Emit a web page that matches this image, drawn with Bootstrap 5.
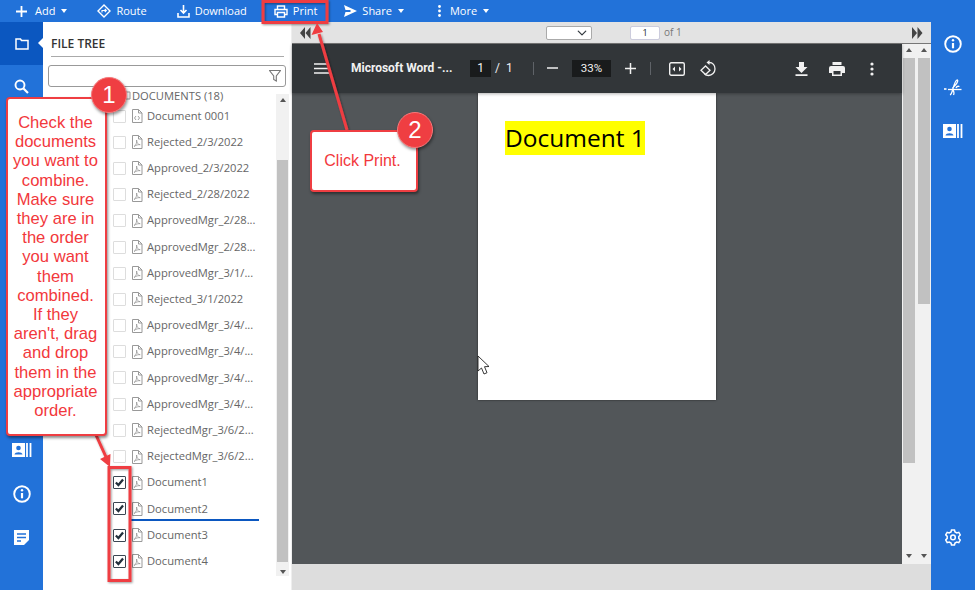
<!DOCTYPE html>
<html lang="en"><head><meta charset="utf-8"><title>File tree</title>
<link href="https://cdn.jsdelivr.net/npm/bootstrap@5.3.0/dist/css/bootstrap.min.css" rel="stylesheet">
<style>
html,body{height:590px;overflow:hidden}
body{font-family:"Open Sans","Liberation Sans",sans-serif;background:#2272d9;position:relative;width:975px}
.appbar{height:22px;background:#2272d9;color:#fff;font-size:11px;padding-left:16px;gap:28px;line-height:22px}
.appbar svg{display:block;margin-right:5px}
.tb-add svg{margin-right:8px}
.tb-route{margin-left:2px}
.tb-down{margin-left:2px}
.tb-print{margin-left:-1px}
.tb-share{margin-left:-1px}
.tb-more{margin-left:6px}
.tb-more svg{margin-right:9px}
.tb-caret{width:0;height:0;border:3.5px solid transparent;border-top:4px solid #fff;border-bottom:0;margin-left:6px}
.main-row{height:568px}
.rail{width:43px;background:#2272d9;padding-bottom:31px}
.rail-r{width:44px}
.rail-btn{height:43.5px;display:flex;align-items:center;justify-content:center;position:relative}
.rail-on{background:#0b57c0;height:43px}
.rail-on::after{content:"";position:absolute;right:-1px;top:15px;border:6px solid transparent;border-right-color:#fff;border-left:0}
.tree-panel{width:248px;background:#fff;color:#555}
.tree-title{font-size:12px;font-weight:600;color:#333;margin:14px 7px 0 8px;height:21px;line-height:16px;border-bottom:1px solid #aaa}
.tree-search{margin:8px 5px 0;height:22px;width:238px;position:relative}
.tree-search .form-control{height:22px;min-height:22px;padding:0 20px 0 4px;border:1px solid #999;border-radius:3px;font-size:11px}
.tree-funnel{position:absolute;right:5px;top:5px}
.tree-body{height:486px;margin-top:3px;padding-right:2px}
.tree-list{flex:1;font-size:11.2px;color:#666;padding-left:70px}
.tree-head{height:13px;line-height:11px;padding-left:10px;white-space:nowrap;display:flex;align-items:flex-start}
.tree-head svg{margin:1px 1px 0 0;flex:none}
.tree-row{height:26.2px;display:flex;align-items:center;white-space:nowrap;position:relative}
.tree-row .form-check-input{width:13px;height:13px;margin:0 5px 0 0;border:1px solid #ddd;border-radius:1px;flex:none}
.form-check-input:checked[type=checkbox]{background-color:#fff;border:1.5px solid #3a4652;--bs-form-check-bg-image:url("data:image/svg+xml,%3Csvg xmlns='http://www.w3.org/2000/svg' viewBox='0 0 13 13'%3E%3Cpath d='M2.2 6.5l3 3 5.500-6.500' fill='none' stroke='%2322303c' stroke-width='2.700'/%3E%3C/svg%3E");background-size:100%}
.tree-ico{flex:none;margin-right:4px}
.tree-drop{position:absolute;left:18px;width:128px;bottom:1px;height:2px;background:#0b57c0}
.vbar{width:13px;background:#f1f1f1;height:482px;margin-top:4px}
.vbar-thumb{background:#c1c1c1}
.vbar .vbar-thumb{width:11px;margin-left:1px}
.tri-up,.tri-dn{width:0;height:0;border:3.5px solid transparent;margin:0 auto}
.tri-up{border-bottom:4px solid #555;border-top:0}
.tri-dn{border-top:4px solid #555;border-bottom:0}
.viewer{width:640px;background:#ddd;border-left:1px solid #eee}
.viewer-top{height:21px;background:#e3e3e3;font-size:10px;color:#777;position:relative}
.viewer-top .form-select{width:46px;height:14px;min-height:14px;padding:0;background-position:right 4px center;background-size:10px;border:1px solid #aaa;border-radius:2px;margin-left:235px}
.viewer-top .form-control{width:30px;height:14px;min-height:14px;padding:0;font-size:9px;text-align:center;border:1px solid #ccd;border-radius:2px;margin:0 4px 0 38px}
.pdf-wrap{height:521px;border-top:1px solid #777}
.pdf-col{width:610px;background:#525659}
.pdf-bar{height:49px;background:#323639;color:#f1f1f1;font-family:Roboto,"Liberation Sans",sans-serif;font-size:12px;box-shadow:0 1px 3px rgba(0,0,0,.3);position:relative}
.pdf-bar>*{position:absolute}
.pdf-box{background:#191b1c;text-align:center;height:17px;line-height:17px;top:16px}
.pdf-sep{width:1px;height:13px;background:#5f6368;top:18px}
.pdf-page{width:238px;height:307px;background:#fff;margin:0 auto;padding-top:28px;padding-left:27px;box-shadow:0 0 2px rgba(0,0,0,.6)}
.pdf-hl{background:#ff0;color:#000;font-size:24.5px;line-height:34px;display:inline-block;font-family:"Open Sans",sans-serif}
.vbars{width:29px;background:#f1f1f1;padding:0 0 0 1px;gap:3px}
.vbars>div{width:12px}
.viewer-foot{height:26px;background:#ddd}
.annot{position:absolute;background:#fff;border:2px solid #ef3e42;border-radius:4px;color:#f2383c;font-family:"Liberation Sans",Arial,sans-serif;box-shadow:1px 2px 3px rgba(0,0,0,.45);text-align:center}
.annot-a{left:6px;top:97px;width:101px;height:339px;font-size:16.6px;line-height:19.2px;padding-top:14px;padding-right:2px}
.annot-b{left:310px;top:130px;width:108px;height:62px;font-size:16px;line-height:58px;padding-right:3px}
.annot-num{position:absolute;background:#ef3e42;color:#fff;border-radius:50%;border:1px solid #f7797b;font-family:"Liberation Sans",Arial,sans-serif;font-size:24px;text-align:center;box-shadow:1px 2px 3px rgba(0,0,0,.4)}
.num-a{left:91px;top:77px;width:36px;height:36px;line-height:34px}
.num-b{left:397px;top:112px;width:36px;height:36px;line-height:34px}
.annot-svg{position:absolute;left:0;top:0;pointer-events:none}
</style></head>
<body>
<svg width="0" height="0" class="position-absolute">
<symbol id="pdfi" viewBox="0 0 12 14"><path d="M1.500.5h6l3.500 3.500v9.500h-9.500z M7.500.5V4H11" fill="none" stroke="#999"/><path d="M3 11.500c2-1 3-4 2.600-6.500 0 3 1.500 4.500 3.600 4.700-2-.2-4.200.3-6.200 1.800z" fill="none" stroke="#999" stroke-width=".8"/></symbol>
<symbol id="cardi" viewBox="0 0 20 16"><path d="M0 1h13v14H0z" fill="#fff"/><circle cx="6.500" cy="6" r="2.300" fill="#2272d9"/><path d="M2.500 12.500c.5-3 7.500-3 8 0z" fill="#2272d9"/><path d="M15 1v14M18.500 1v14" stroke="#fff" stroke-width="1.800"/></symbol>
<symbol id="infoi" viewBox="0 0 18 18"><circle cx="9" cy="9" r="7.800" fill="none" stroke="#fff" stroke-width="1.900"/><circle cx="9" cy="5.300" r="1.200" fill="#fff"/><path d="M9 8v5.300" stroke="#fff" stroke-width="2.200"/></symbol>
</svg>

<nav class="appbar d-flex align-items-center">
<div class="tb-add d-flex align-items-center"><svg width="11" height="11" viewBox="0 0 11 11"><path d="M5.500 0v11M0 5.500h11" stroke="#fff" stroke-width="1.800"/></svg>Add<span class="tb-caret"></span></div>
<div class="tb-route d-flex align-items-center"><svg width="14" height="14" viewBox="0 0 14 14"><path d="M7 1l6 6-6 6-6-6z" fill="none" stroke="#fff" stroke-width="1.400"/><path d="M5 8.500V6.500h4M7.800 5l1.500 1.500-1.500 1.500" fill="none" stroke="#fff" stroke-width="1.100"/></svg>Route</div>
<div class="tb-down d-flex align-items-center"><svg width="13" height="13" viewBox="0 0 13 13"><path d="M6.500 0v7.500M3.500 5l3 3 3-3" fill="none" stroke="#fff" stroke-width="1.600"/><path d="M1 8v4h11V8" fill="none" stroke="#fff" stroke-width="1.600"/></svg>Download</div>
<div class="tb-print d-flex align-items-center"><svg width="14" height="13" viewBox="0 0 14 13"><path d="M3.500 4V1h7v3M3.500 9.500H1V4.500h12v5h-2.500M3.500 7.500h7V12h-7z" fill="none" stroke="#fff" stroke-width="1.400"/></svg>Print</div>
<div class="tb-share d-flex align-items-center"><svg width="13" height="12" viewBox="0 0 13 12"><path d="M0 0l13 6-13 6 1.500-5h5v-2h-5z" fill="#fff"/></svg>Share<span class="tb-caret"></span></div>
<div class="tb-more d-flex align-items-center"><svg width="3" height="12" viewBox="0 0 3 12"><circle cx="1.500" cy="1.500" r="1.400" fill="#fff"/><circle cx="1.500" cy="6" r="1.400" fill="#fff"/><circle cx="1.500" cy="10.500" r="1.400" fill="#fff"/></svg>More<span class="tb-caret"></span></div>
</nav>

<div class="main-row d-flex">
<aside class="rail d-flex flex-column justify-content-between">
<div>
<div class="rail-btn rail-on"><svg width="14" height="12" viewBox="0 0 14 12"><path d="M1 1h4.500l1 1.500H13V11H1z" fill="none" stroke="#fff" stroke-width="1.500"/></svg></div>
<div class="rail-btn"><svg width="15" height="15" viewBox="0 0 15 15"><circle cx="6" cy="6" r="4.500" fill="none" stroke="#fff" stroke-width="1.900"/><path d="M9.500 9.500l4.500 4.500" stroke="#fff" stroke-width="2.200"/></svg></div>
</div>
<div>
<div class="rail-btn"><svg width="20" height="16"><use href="#cardi"/></svg></div>
<div class="rail-btn"><svg width="18" height="18"><use href="#infoi"/></svg></div>
<div class="rail-btn"><svg width="15" height="15" viewBox="0 0 15 15"><path d="M0 0h15v10l-5 5H0z" fill="#fff"/><path d="M3 4h9M3 7.500h9M3 11h4" stroke="#2272d9" stroke-width="1.400"/></svg></div>
</div>
</aside>

<section class="tree-panel">
<div class="tree-title">FILE TREE</div>
<div class="tree-search"><input class="form-control" type="text" aria-label="Filter"><svg class="tree-funnel" width="12" height="12" viewBox="0 0 12 12"><path d="M.5.500h11L7.300 6v5L4.700 9.500V6z" fill="#fff" stroke="#777" stroke-width="1.100"/></svg></div>
<div class="tree-body d-flex">
<div class="tree-list">
<div class="tree-head"><svg width="8" height="9" viewBox="0 0 8 9"><path d="M1 1h6v7H1z" fill="none" stroke="#999"/></svg>DOCUMENTS (18)</div>
<div class="tree-row"><input class="form-check-input" type="checkbox"><svg class="tree-ico" width="12" height="14" viewBox="0 0 12 14"><path d="M1.500.5h6l3.500 3.500v9.500h-9.500z M7.500.5V4H11" fill="none" stroke="#999"/><path d="M5 7L3.500 9 5 11M7 7l1.500 2L7 11" fill="none" stroke="#888" stroke-width=".8"/></svg>Document 0001</div>
<div class="tree-row"><input class="form-check-input" type="checkbox"><svg class="tree-ico" width="12" height="14"><use href="#pdfi"/></svg>Rejected_2/3/2022</div>
<div class="tree-row"><input class="form-check-input" type="checkbox"><svg class="tree-ico" width="12" height="14"><use href="#pdfi"/></svg>Approved_2/3/2022</div>
<div class="tree-row"><input class="form-check-input" type="checkbox"><svg class="tree-ico" width="12" height="14"><use href="#pdfi"/></svg>Rejected_2/28/2022</div>
<div class="tree-row"><input class="form-check-input" type="checkbox"><svg class="tree-ico" width="12" height="14"><use href="#pdfi"/></svg>ApprovedMgr_2/28...</div>
<div class="tree-row"><input class="form-check-input" type="checkbox"><svg class="tree-ico" width="12" height="14"><use href="#pdfi"/></svg>ApprovedMgr_2/28...</div>
<div class="tree-row"><input class="form-check-input" type="checkbox"><svg class="tree-ico" width="12" height="14"><use href="#pdfi"/></svg>ApprovedMgr_3/1/...</div>
<div class="tree-row"><input class="form-check-input" type="checkbox"><svg class="tree-ico" width="12" height="14"><use href="#pdfi"/></svg>Rejected_3/1/2022</div>
<div class="tree-row"><input class="form-check-input" type="checkbox"><svg class="tree-ico" width="12" height="14"><use href="#pdfi"/></svg>ApprovedMgr_3/4/...</div>
<div class="tree-row"><input class="form-check-input" type="checkbox"><svg class="tree-ico" width="12" height="14"><use href="#pdfi"/></svg>ApprovedMgr_3/4/...</div>
<div class="tree-row"><input class="form-check-input" type="checkbox"><svg class="tree-ico" width="12" height="14"><use href="#pdfi"/></svg>ApprovedMgr_3/4/...</div>
<div class="tree-row"><input class="form-check-input" type="checkbox"><svg class="tree-ico" width="12" height="14"><use href="#pdfi"/></svg>ApprovedMgr_3/4/...</div>
<div class="tree-row"><input class="form-check-input" type="checkbox"><svg class="tree-ico" width="12" height="14"><use href="#pdfi"/></svg>RejectedMgr_3/6/2...</div>
<div class="tree-row"><input class="form-check-input" type="checkbox"><svg class="tree-ico" width="12" height="14"><use href="#pdfi"/></svg>RejectedMgr_3/6/2...</div>
<div class="tree-row"><input class="form-check-input" type="checkbox" checked><svg class="tree-ico" width="12" height="14"><use href="#pdfi"/></svg>Document1</div>
<div class="tree-row"><input class="form-check-input" type="checkbox" checked><svg class="tree-ico" width="12" height="14"><use href="#pdfi"/></svg>Document2<span class="tree-drop"></span></div>
<div class="tree-row"><input class="form-check-input" type="checkbox" checked><svg class="tree-ico" width="12" height="14"><use href="#pdfi"/></svg>Document3</div>
<div class="tree-row"><input class="form-check-input" type="checkbox" checked><svg class="tree-ico" width="12" height="14"><use href="#pdfi"/></svg>Document4</div>
</div>
<div class="vbar d-flex flex-column"><div class="tri-up mt-1"></div><div style="height:58px"></div><div class="vbar-thumb" style="height:402px"></div><div class="tri-dn mt-2"></div></div>
</div>
</section>

<section class="viewer d-flex flex-column">
<div class="viewer-top d-flex align-items-center">
<svg class="ms-2" width="11" height="12" viewBox="0 0 11 12"><path d="M5 0v12L0 6zM10.500 0v12l-5-6z" fill="#444"/></svg>
<select class="form-select" aria-label="Scale"><option></option></select>
<input class="form-control" type="text" value="1" aria-label="Page"><span>of 1</span>
<svg class="ms-auto me-2" width="11" height="12" viewBox="0 0 11 12"><path d="M0 0v12l5-6zM5.500 0v12l5-6z" fill="#444"/></svg>
</div>
<div class="pdf-wrap d-flex">
<div class="pdf-col">
<div class="pdf-bar">
<svg style="left:22px;top:19px" width="15" height="11" viewBox="0 0 15 11"><path d="M0 1h15M0 5.500h15M0 10h15" stroke="#f1f1f1" stroke-width="1.500"/></svg>
<b style="left:59px;top:16px;line-height:17px">Microsoft Word -...</b>
<span class="pdf-box" style="left:178px;width:21px">1</span>
<span style="left:203px;top:16px;line-height:17px">/</span>
<span style="left:214px;top:16px;line-height:17px">1</span>
<span class="pdf-sep" style="left:241px"></span>
<svg style="left:255px;top:23px" width="11" height="2"><path d="M0 1h11" stroke="#f1f1f1" stroke-width="1.500"/></svg>
<span class="pdf-box" style="left:280px;width:39px;font-size:11.500px">33%</span>
<svg style="left:333px;top:19px" width="11" height="11" viewBox="0 0 11 11"><path d="M5.500 0v11M0 5.500h11" stroke="#f1f1f1" stroke-width="1.500"/></svg>
<span class="pdf-sep" style="left:358px"></span>
<svg style="left:377px;top:18px" width="16" height="14" viewBox="0 0 16 14"><rect x=".7" y=".7" width="14.600" height="12.600" rx="1.500" fill="none" stroke="#f1f1f1" stroke-width="1.400"/><path d="M6 4.500L3.500 7 6 9.500zM10 4.500L12.500 7 10 9.500z" fill="#f1f1f1"/></svg>
<svg style="left:408px;top:16px" width="16" height="17" viewBox="0 0 16 17"><path d="M9 2.500c4 0 6 3 6 6.500s-3 6.500-6.500 6.500c-2 0-3-.7-4-1.500" fill="none" stroke="#f1f1f1" stroke-width="1.300"/><path d="M9.500 0v5L6.500 2.500z" fill="#f1f1f1"/><path d="M5.500 6L1 10.200l4.500 4.300 4.500-4.300z" fill="none" stroke="#f1f1f1" stroke-width="1.300"/></svg>
<svg style="left:503px;top:18px" width="13" height="14" viewBox="0 0 13 14"><path d="M4 0h5v5h3.500l-6 6-6-6H4zM.5 12.300h12V14H.5z" fill="#f1f1f1"/></svg>
<svg style="left:537px;top:18px" width="16" height="14" viewBox="0 0 16 14"><path d="M3.500 0h9v3h-9zM2 4h12a2 2 0 0 1 2 2v5h-3v3H3v-3H0V6a2 2 0 0 1 2-2zM4.500 9v3.500h7V9z" fill="#f1f1f1" fill-rule="evenodd"/></svg>
<svg style="left:578px;top:18px" width="4" height="14" viewBox="0 0 4 14"><circle cx="2" cy="2" r="1.600" fill="#f1f1f1"/><circle cx="2" cy="7" r="1.600" fill="#f1f1f1"/><circle cx="2" cy="12" r="1.600" fill="#f1f1f1"/></svg>
</div>
<div class="pdf-page"><span class="pdf-hl">Document 1</span></div>
</div>
<div class="vbars d-flex">
<div class="d-flex flex-column"><div class="tri-up mt-1"></div><div class="vbar-thumb" style="height:405px;margin-top:6px"></div><div class="tri-dn" style="margin-top:auto;margin-bottom:6px"></div></div>
<div class="d-flex flex-column"><div class="tri-up mt-1"></div><div class="vbar-thumb" style="height:246px;margin-top:6px"></div><div class="tri-dn" style="margin-top:auto;margin-bottom:6px"></div></div>
</div>
</div>
<div class="viewer-foot"></div>
</section>

<aside class="rail rail-r d-flex flex-column justify-content-between">
<div>
<div class="rail-btn"><svg width="18" height="18"><use href="#infoi"/></svg></div>
<div class="rail-btn"><svg width="18" height="17" viewBox="0 0 18 17"><path d="M0 10h2.500" stroke="#fff" stroke-width="1.600"/><path d="M4 10.500h13.500" stroke="#fff" stroke-width="1.300"/><path d="M6 16c1.500-.5 2-3 3-6.500S11.500 1.500 13 1c1.500 0 .5 3-2 5.500L8.500 9M9.500 16c1-1.500.5-3.500-1-6.500M12 9c.5-1.200 2-2 3.500-1.500" fill="none" stroke="#fff" stroke-width="1.300"/></svg></div>
<div class="rail-btn"><svg width="20" height="16"><use href="#cardi"/></svg></div>
</div>
<div class="rail-btn"><svg width="16" height="17" viewBox="0 0 16 17"><path d="M6.500 1h3l.5 2 1.800 1 2-.6 1.500 2.600-1.500 1.500v2l1.500 1.500-1.500 2.600-2-.6-1.800 1-.5 2h-3l-.5-2-1.800-1-2 .6L.7 10.900l1.500-1.500v-2L.7 5.900l1.500-2.500 2 .6 1.800-1z" fill="none" stroke="#fff" stroke-width="1.500"/><circle cx="8" cy="8.400" r="2.300" fill="none" stroke="#fff" stroke-width="1.500"/></svg></div>
</aside>
</div>

<svg class="annot-svg" width="975" height="590" viewBox="0 0 975 590">
<defs><filter id="sh" x="-20%" y="-20%" width="140%" height="140%"><feDropShadow dx="1" dy="1" stdDeviation="1" flood-opacity=".4"/></filter></defs>
<g fill="none" stroke="#ef3e42" stroke-width="3" filter="url(#sh)">
<rect x="263" y="1.500" width="64" height="21"/>
<rect x="109" y="467.500" width="21" height="113"/>
<path d="M96 435l10 22M347 130l-28-96"/>
</g>
<path d="M110 467l-10-8 10.500-5zM317 23l-5.500 12 11.500-3z" fill="#ef3e42"/>
<path d="M478 356l0 15 3.500-3 2.500 6 3-1.300-2.500-6 4.500-.2z" fill="#fff" stroke="#222" stroke-width=".9"/>
</svg>
<div class="annot annot-a">Check the<br>documents<br>you want to<br>combine.<br>Make sure<br>they are in<br>the order<br>you want<br>them<br>combined.<br>If they<br>aren't, drag<br>and drop<br>them in the<br>appropriate<br>order.</div>
<div class="annot-num num-a">1</div>
<div class="annot annot-b">Click Print.</div>
<div class="annot-num num-b">2</div>
<script src="https://cdn.jsdelivr.net/npm/bootstrap@5.3.0/dist/js/bootstrap.bundle.min.js"></script>
</body></html>
